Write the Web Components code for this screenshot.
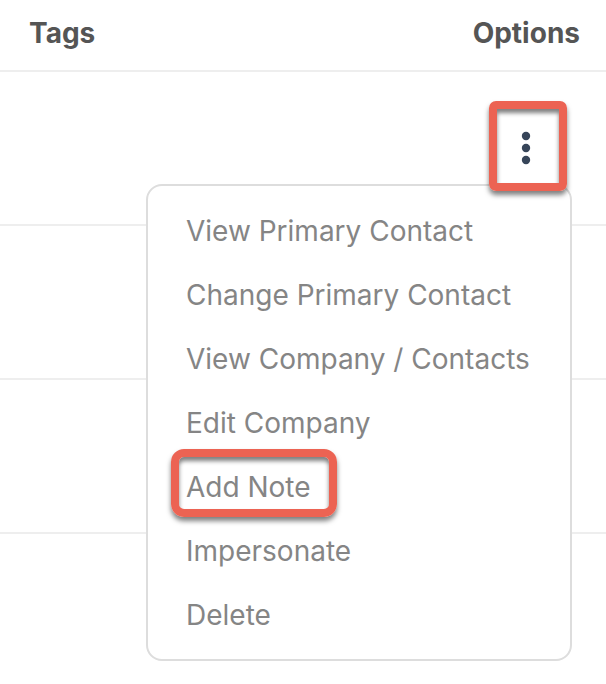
<!DOCTYPE html>
<html lang="en">
<head>
<meta charset="utf-8">
<title>Companies table options</title>
<style>
  html, body { margin: 0; height: 684px; overflow: hidden; background: #fff; }
  body { font-family: Inter, "Liberation Sans", sans-serif; }
</style>
</head>
<body>
<company-table>
  <span slot="left">Tags</span>
  <span slot="right">Options</span>
  <table-row>
    <anno-mark kind="button"><dots-button></dots-button></anno-mark>
    <options-menu>
      <menu-item>View Primary Contact</menu-item>
      <menu-item>Change Primary Contact</menu-item>
      <menu-item>View Company / Contacts</menu-item>
      <menu-item>Edit Company</menu-item>
      <menu-item><anno-mark kind="text">Add Note</anno-mark></menu-item>
      <menu-item>Impersonate</menu-item>
      <menu-item>Delete</menu-item>
    </options-menu>
  </table-row>
  <table-row></table-row>
  <table-row></table-row>
</company-table>

<script>
// table shell: header plus the rows
class CompanyTable extends HTMLElement {
  constructor() {
    super();
    this.attachShadow({ mode: 'open' });
    this.shadowRoot.innerHTML = `
      <style>
        :host { display: block; position: relative; }
        .head {
          display: flex;
          justify-content: space-between;
          align-items: center;
          height: 66px;
          padding: 0 26px 4px 29px;
          border-bottom: 2px solid #eeeeee;
          font-size: 28px;
          font-weight: 700;
          color: #555555;
        }
      </style>
      <div class="head"><slot name="left"></slot><slot name="right"></slot></div>
      <slot></slot>`;
  }
}

class TableRow extends HTMLElement {
  constructor() {
    super();
    this.attachShadow({ mode: 'open' });
    this.shadowRoot.innerHTML = `
      <style>
        :host {
          display: flex;
          justify-content: flex-end;
          align-items: flex-start;
          box-sizing: border-box;
          height: 154px;
          padding: 37px 47px 0 0;
          border-bottom: 2px solid #eeeeee;
        }
      </style>
      <slot></slot>`;
  }
}

// the three dots
class DotsButton extends HTMLElement {
  constructor() {
    super();
    this.attachShadow({ mode: 'open' });
    this.shadowRoot.innerHTML = `
      <style>
        :host {
          display: flex;
          align-items: center;
          justify-content: center;
          box-sizing: border-box;
          width: 62px;
          height: 74px;
          padding: 4px 4px 0 0;
        }
        svg { display: block; }
      </style>
      <svg width="10" height="34" viewBox="0 0 10 34" fill="#374559">
        <circle cx="5" cy="5" r="4.2"/>
        <circle cx="5" cy="17" r="4.2"/>
        <circle cx="5" cy="29" r="4.2"/>
      </svg>`;
  }
}

// red annotation frame drawn over whatever is inside it
class AnnoMark extends HTMLElement {
  constructor() {
    super();
    this.attachShadow({ mode: 'open' });
    this.shadowRoot.innerHTML = `
      <style>
        :host { display: inline-block; position: relative; z-index: 5; }
        .frame {
          position: absolute;
          box-sizing: border-box;
          border: 8px solid #ec6353;
          box-shadow: 0 4px 5px rgba(0,0,0,.5), inset 0 4px 4px rgba(0,0,0,.5);
          pointer-events: none;
        }
        :host([kind="button"]) .frame { inset: -8px; border-radius: 7px; }
        :host([kind="text"]) .frame { inset: -21px -26px -13px -15px; border-radius: 13px; }
      </style>
      <slot></slot><div class="frame"></div>`;
  }
}

// popup, lies over the rows
class OptionsMenu extends HTMLElement {
  constructor() {
    super();
    this.attachShadow({ mode: 'open' });
    this.shadowRoot.innerHTML = `
      <style>
        :host {
          display: block;
          position: absolute;
          left: 146px;
          top: 184px;
          width: 426px;
          box-sizing: border-box;
          padding: 13px 0 12px;
          background: #fff;
          border: 2px solid #dddddd;
          border-radius: 16px;
        }
      </style>
      <slot></slot>`;
  }
}

class MenuItem extends HTMLElement {
  constructor() {
    super();
    this.attachShadow({ mode: 'open' });
    this.shadowRoot.innerHTML = `
      <style>
        :host {
          display: flex;
          align-items: center;
          height: 64px;
          padding-left: 38px;
          font-size: 28px;
          color: #858585;
          white-space: nowrap;
        }
      </style>
      <slot></slot>`;
  }
}

customElements.define('company-table', CompanyTable);
customElements.define('table-row', TableRow);
customElements.define('dots-button', DotsButton);
customElements.define('anno-mark', AnnoMark);
customElements.define('options-menu', OptionsMenu);
customElements.define('menu-item', MenuItem);
</script>
</body>
</html>
